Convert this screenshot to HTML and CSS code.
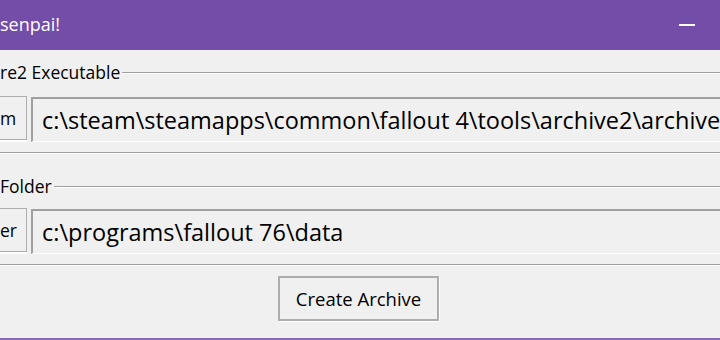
FILE: index.html
```html
<!DOCTYPE html>
<html lang="en">
<head>
    <meta charset="UTF-8">
    <title>senpai!</title>
    <link rel="stylesheet" href="styles.css">
</head>
<body>

<div class="window">
    <header class="titlebar">
        <span class="title">senpai!</span>
        <span class="minimize"></span>
    </header>

    <div class="group">
        <div class="group-head">
            <span class="group-label">re2 Executable</span>
            <span class="group-line"></span>
        </div>
        <div class="row">
            <button class="pick-btn">m</button>
            <div class="path-box">c:\steam\steamapps\common\fallout 4\tools\archive2\archive2.exe</div>
        </div>
    </div>

    <div class="group">
        <div class="group-head">
            <span class="group-label">Folder</span>
            <span class="group-line"></span>
        </div>
        <div class="row">
            <button class="pick-btn">er</button>
            <div class="path-box">c:\programs\fallout 76\data</div>
        </div>
    </div>

    <div class="actions">
        <button class="create-btn">Create Archive</button>
    </div>
</div>

</body>
</html>
```

FILE: styles.css
```css
body {
    margin: 0;
    background-color: #f0f0f0;
    font-family: "Open Sans", "Noto Sans", sans-serif;
    width: 720px;
    height: 340px;
    overflow: hidden;
}

.window {
    height: 338px;
    border-bottom: 2px solid #8a6ab8;
    display: flex;
    flex-direction: column;
}

.titlebar {
    height: 50px;
    background-color: #744da9;
    display: flex;
    justify-content: space-between;
    align-items: center;
    color: white;
}

.title {
    font-size: 18px;
    margin-top: -2px;
}

.minimize {
    width: 16px;
    height: 2px;
    background-color: white;
    margin-right: 25px;
}

.group {
    border-bottom: 1px solid #a0a0a0;
    box-shadow: 0 1px 0 #ffffff;
    padding-bottom: 10px;
}

.group-head {
    display: flex;
    align-items: center;
    height: 20px;
    margin-top: 12px;
}

.group + .group .group-head {
    margin-top: 23px;
}

.group-label {
    font-size: 17.5px;
    line-height: 20px;
    padding-right: 2px;
}

.group-line {
    flex: 1;
    height: 1px;
    background-color: #a0a0a0;
    box-shadow: 0 1px 0 #ffffff;
}

.row {
    display: flex;
    gap: 4px;
    margin-top: 14px;
    height: 46px;
}

.group + .group .row {
    margin-top: 12px;
}

.pick-btn {
    width: 27px;
    height: 44px;
    margin: 0;
    padding: 0;
    border: 1px solid #adadad;
    border-left: none;
    background-color: #f0f0f0;
    font-family: inherit;
    font-size: 17.5px;
    text-align: left;
    color: #000;
    box-shadow: 0 2px 0 #ffffff;
}

.path-box {
    flex: 1;
    margin-top: 1px;
    border-top: 2px solid #a0a0a0;
    border-left: 2px solid #a0a0a0;
    border-bottom: 1px solid #ffffff;
    padding-left: 9px;
    font-size: 23.5px;
    line-height: 42px;
    white-space: nowrap;
    overflow: hidden;
}

.actions {
    display: flex;
    justify-content: center;
    margin-top: 11px;
}

.create-btn {
    width: 161px;
    height: 45px;
    margin-left: -3px;
    border: 2px solid #adadad;
    background-color: #f0f0f0;
    font-family: inherit;
    font-size: 18.5px;
    color: #000;
    box-shadow: 1px 1px 0 #ffffff;
}
```
